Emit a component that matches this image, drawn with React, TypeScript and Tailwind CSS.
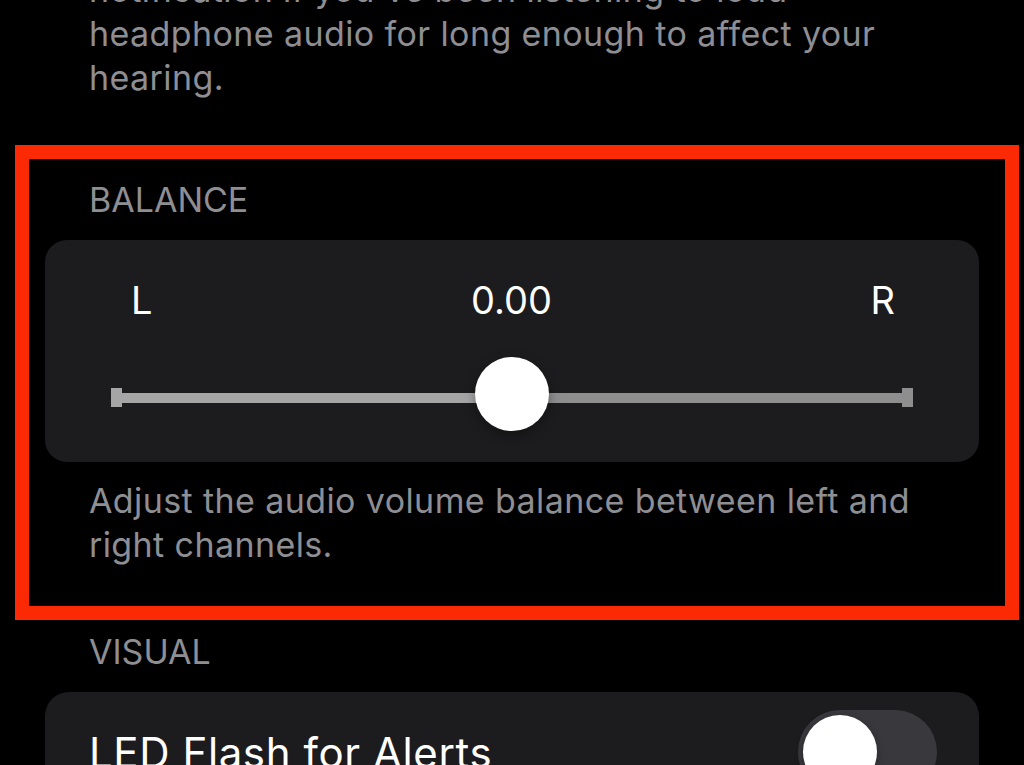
import React from "react";

const font = { fontFamily: "Inter, 'Noto Sans', sans-serif" };

export default function App() {
  return (
    <div
      className="relative w-[1024px] h-[765px] overflow-hidden bg-black"
      style={font}
    >
      <div className="flex flex-col px-[45px]">
        <p className="mt-[-32px] px-[44px] text-[34px] leading-[44px] tracking-[0.4px] text-[#8e8e93]">
          notification if you've been listening to loud headphone audio for
          long enough to affect your hearing.
        </p>

        <div className="mt-[80px] px-[44px] text-[34px] leading-[40px] text-[#8e8e93]">
          BALANCE
        </div>

        <div className="mt-[20px] h-[222px] rounded-[22px] bg-[#1c1c1e] flex flex-col">
          <div className="flex items-baseline justify-between pl-[86px] pr-[84px] pt-[37px] text-[38px] leading-[46px] text-white">
            <span>L</span>
            <span>0.00</span>
            <span>R</span>
          </div>
          <div className="relative mx-[66px] mt-[65px] h-[19px] flex items-center">
            <div className="w-[11px] h-[19px] bg-[#a5a5a5]" />
            <div className="flex-1 h-[10px] bg-[#a5a5a5]" />
            <div className="flex-1 h-[10px] bg-[#8e8e8e]" />
            <div className="w-[11px] h-[19px] bg-[#8e8e8e]" />
            <div className="absolute left-1/2 top-[-31px] -translate-x-1/2 w-[74px] h-[74px] rounded-full bg-white shadow-[0_4px_12px_rgba(0,0,0,0.35)]" />
          </div>
        </div>

        <p className="mt-[17px] px-[44px] text-[34px] leading-[44px] tracking-[0.4px] text-[#8e8e93]">
          Adjust the audio volume balance between left and right channels.
        </p>

        <div className="mt-[65px] px-[44px] text-[34px] leading-[40px] text-[#8e8e93]">
          VISUAL
        </div>

        <div className="mt-[20px] h-[120px] rounded-[24px] bg-[#1c1c1e] flex items-start justify-between pl-[44px] pr-[42px] pt-[18px]">
          <span className="mt-[18px] text-[42px] leading-[50px] tracking-[0.6px] text-white">
            LED Flash for Alerts
          </span>
          <div className="w-[139px] h-[84px] rounded-full bg-[#39393d] p-[5px] flex">
            <div className="w-[74px] h-[74px] rounded-full bg-white shadow-[0_3px_8px_rgba(0,0,0,0.3)]" />
          </div>
        </div>
      </div>

      <div className="absolute left-[15px] top-[145px] w-[1004px] h-[475px] border-[14px] border-[#fb2a05] pointer-events-none" />
    </div>
  );
}
